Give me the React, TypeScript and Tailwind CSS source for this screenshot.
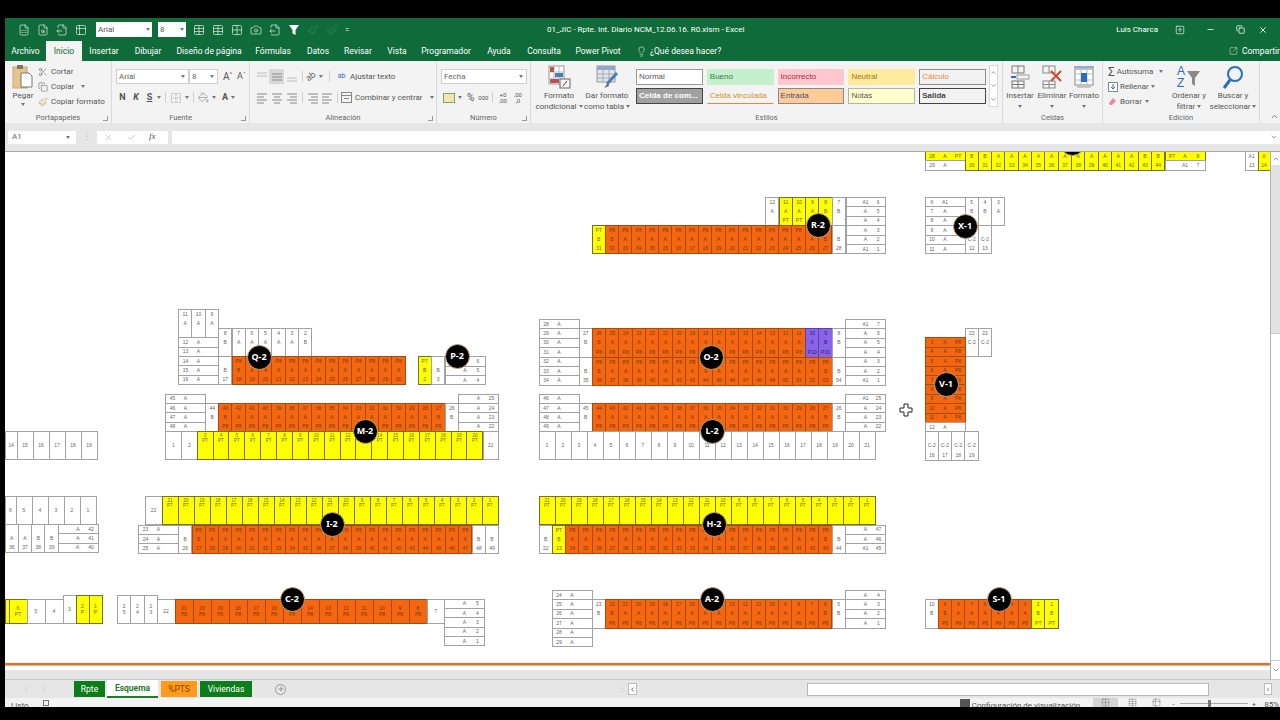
import {
  Camera, Check, ChevronDown, ChevronLeft, ChevronRight, ChevronUp, Copy, FileOutput, FileSearch, FileSpreadsheet,
  Grid2x2, Lightbulb, Minus, PaintBucket, Paintbrush, Plus, Scissors, SquareArrowOutUpRight, SquareArrowUp, Table, Table2, X,
} from 'lucide-react';
import type { ReactNode } from 'react';

const R = 9.4;
const W = 13.33;

type Kind = 'w' | 'o' | 'y' | 'p';
type Seat = { x: number; y: number; w: number; h: number; kind: Kind; lines: string[]; row?: boolean; pack?: 'top' | 'center' };

const kinds: Record<Kind, string> = {
  w: 'bg-white border-[#a2a2a2] text-[#666]',
  o: 'bg-[#f4660f] border-[#a64a10] text-[#7a3a10]',
  y: 'bg-[#ffff00] border-[#707028] text-[#66661a]',
  p: 'bg-[#8a63e8] border-[#5a3fb0] text-[#2a1a66]',
};

const nums = (a: number, b: number) => {
  const out: number[] = [];
  for (let n = a; a < b ? n <= b : n >= b; n += a < b ? 1 : -1) out.push(n);
  return out;
};

const box = (x: number, y: number, w: number, h: number, kind: Kind, lines: string[], pack?: 'top' | 'center'): Seat => ({ x, y, w, h, kind, lines, pack });

const rows = (x: number, y: number, w: number, list: string[][], kind: Kind = 'w'): Seat[] =>
  list.map((lines, i) => ({ x, y: y + i * R, w, h: R, kind, lines, row: true }));

const seats = (x: number, y: number, ns: number[], kind: Kind, line: (n: string, i: number, len: number) => string[], w = W, h = 3 * R): Seat[] =>
  ns.map((n, i) => box(x + i * w, y, w, h, kind, line(String(n), i, ns.length)));

// letter in the middle of a seat: B on the ends that have it, A elsewhere
const mid = (i: number, len: number, ends = 'BB') => ((i === 0 && ends[0] === 'B') || (i === len - 1 && ends[1] === 'B') ? 'B' : 'A');
const numTop = (p: string, ends = 'BB') => (n: string, i: number, len: number) => [n, mid(i, len, ends), p];
const numBot = (p: string, ends = 'BB') => (n: string, i: number, len: number) => [p, mid(i, len, ends), n];
const tall = (n: string) => [n, 'PT'];
const lefts = (ns: number[]) => ns.map(n => [String(n), 'A', '']);

const seatList: Seat[] = [
  // top strip
  ...rows(925, 151, 40, [['28', 'A', 'PT']], 'y'),
  ...rows(925, 160.4, 40, [['29', 'A', '']]),
  ...seats(965, 151, nums(30, 44), 'y', (n, i, len) => [i < 2 || i > len - 3 ? 'B' : 'A', n], W, 2 * R),
  ...rows(1165, 151, 40, [['P7', 'A', '8']], 'y'),
  ...rows(1165, 160.4, 40, [['', 'A1', '7']]),
  box(1245, 151, W, 2 * R, 'w', ['A1', '13']),
  box(1258, 151, 12, 2 * R, 'y', ['A', '14']),

  // R-2
  box(765.5, 197, W, 3 * R, 'w', ['12', 'A', '']),
  ...seats(779, 197, [11, 10, 9, 8], 'y', (n, i) => [n, i === 3 ? 'B' : 'A', i < 2 ? 'PT' : '']),
  box(832, 197, W, 3 * R, 'w', ['7', 'B', '']),
  box(832, 225.2, W, 3 * R, 'w', ['', 'B', '28']),
  ...rows(846, 197, 39, [['', 'A1', '6'], ['', 'A', '5'], ['', 'A', '4'], ['', 'A', '3'], ['', 'A', '2'], ['', 'A1', '1']]),
  box(592, 225.2, W, 3 * R, 'y', ['PT', 'B', '31']),
  ...seats(605.3, 225.2, [32, 33, 34, 35, ...nums(15, 27)], 'o', numBot('P8')),

  // X-1
  ...rows(925, 197, 40, [['6', 'A1', ''], ...lefts([7, 8, 9, 10, 11])]),
  ...seats(965, 197, [5, 4, 3], 'w', (n, i) => [n, i === 2 ? 'A' : 'B', '']),
  ...seats(965, 225.2, [12, 13], 'w', n => ['', 'C-2', n]),

  // Q-2
  ...seats(178.5, 309, [11, 10, 9], 'w', n => [n, 'A', '']),
  ...rows(178.5, 337.2, 40, lefts([12, 13, 14, 15, 16])),
  box(218.5, 328, W, 3 * R, 'w', ['8', 'B', '']),
  box(218.5, 356.2, W, 3 * R, 'w', ['', 'B', '17']),
  ...seats(232, 328, [7, 6, 5, 4, 3, 2], 'w', (n, i) => [n, i === 5 ? 'B' : 'A', '']),
  ...seats(232, 356.2, nums(18, 30), 'o', numBot('P8', 'B-')),

  // P-2
  box(418, 356.2, W, 3 * R, 'y', ['P7', 'B', '2']),
  box(431.5, 356.2, W, 3 * R, 'w', ['', 'B', '3']),
  ...rows(445, 356.2, 40, [['', '', '6'], ['', 'A', '5'], ['', 'A', '4']]),

  // M-2
  ...rows(165.5, 393.5, 40, lefts([45, 46, 47, 48])),
  box(205.5, 403, W, 3 * R, 'w', ['44', 'B', '']),
  ...seats(218.5, 403, nums(43, 27), 'o', numTop('P8')),
  box(445, 403, W, 3 * R, 'w', ['26', 'B', '']),
  ...rows(458.5, 393.5, 40, [['', 'A', '25'], ['', 'A', '24'], ['', 'A', '23'], ['', 'A', '22']]),
  ...seats(165.5, 431, [1, 2], 'w', n => [n], 15.87, 28),
  ...nums(3, 20).map((n, i) => box(197.2 + i * 15.87, 431, 15.87, 28, 'y', tall(String(n)), 'top')),
  box(483, 431, 15.5, 28, 'w', ['21']),

  // O-2
  ...rows(539, 319, 40, lefts([28, 29, 30, 31, 32, 33, 34])),
  box(579, 328.4, W, 3 * R, 'w', ['27', 'B', '']),
  box(579, 356.6, W, 3 * R, 'w', ['', 'B', '35']),
  ...seats(592.3, 328.4, nums(26, 11), 'o', (n, i) => [n, i === 0 ? 'B' : 'A', 'P8']),
  box(805.6, 328.4, W, 3 * R, 'p', ['10', 'A', 'P10']),
  box(818.9, 328.4, W, 3 * R, 'p', ['9', 'B', 'P10']),
  ...seats(592.3, 356.6, nums(36, 53), 'o', numBot('P8')),
  box(832.2, 328.4, W, 3 * R, 'w', ['8', 'B', '']),
  box(832.2, 356.6, W, 3 * R, 'w', ['', 'B', '54']),
  ...rows(845.5, 319, 40, [['', 'A1', '7'], ['', 'A', '6'], ['', 'A', '5'], ['', 'A', '4'], ['', 'A', '3'], ['', 'A', '2'], ['', 'A1', '1']]),

  // L-2
  ...rows(539, 393.5, 40, lefts([46, 47, 48, 49])),
  box(579, 403, W, 3 * R, 'w', ['45', 'B', '']),
  ...seats(592.3, 403, nums(44, 27), 'o', numTop('P8')),
  box(832.2, 403, W, 3 * R, 'w', ['26', 'B', '']),
  ...rows(845.5, 393.5, 40, [['', 'A1', '25'], ['', 'A', '24'], ['', 'A', '23'], ['', 'A', '22']]),
  ...seats(539, 431, nums(1, 21), 'w', n => [n], 16, 28),

  // V-1
  ...seats(965, 328, [23, 22], 'w', n => [n, 'C-2', '']),
  ...rows(925, 337.4, 40, nums(3, 11).map(n => [String(n), 'A', 'P8']), 'o'),
  ...rows(925, 422, 40, [['12', 'A', '']]),
  ...seats(925, 431.4, [16, 17, 18, 19], 'w', n => ['', 'C-2', n]),

  // row to the left of the M-2 row
  box(5, 431, 12, 28, 'w', ['14']),
  ...seats(17, 431, nums(15, 19), 'w', n => [n], 16, 28),

  // left block beside I-2
  box(5, 496, 11, 28, 'w', ['6']),
  ...seats(16, 496, nums(5, 1), 'w', n => [n], 16, 28),
  ...seats(5, 524, [36, 37, 38, 39], 'w', (n, i) => ['', i < 2 ? 'A' : 'B', n]),
  ...rows(58, 524, 40, [['', 'A', '42'], ['', 'A', '41'], ['', "A'", '40']]),

  // I-2
  box(145, 496, 17, 28, 'w', ['22']),
  ...nums(21, 1).map((n, i) => box(162 + i * 16, 496, 16, 28, 'y', tall(String(n)), 'top')),
  ...rows(138.5, 524.6, 40, lefts([23, 24, 25])),
  box(178.5, 524.6, W, 3 * R, 'w', ['', 'B', '26']),
  ...seats(192, 524.6, nums(27, 47), 'o', numBot('P8', 'B-')),
  ...seats(472, 524.6, [48, 49], 'w', n => ['', 'B', n]),

  // H-2
  ...nums(21, 1).map((n, i) => box(539 + i * 16, 496, 16, 28, 'y', tall(String(n)), 'top')),
  box(539, 524.6, W, 3 * R, 'w', ['', 'B', '22']),
  box(552.3, 524.6, W, 3 * R, 'y', ['PT', 'B', '23']),
  ...seats(565.6, 524.6, nums(24, 43), 'o', numBot('P8', '-B')),
  box(832.2, 524.6, W, 3 * R, 'w', ['', 'B', '44']),
  ...rows(845.5, 524.6, 40, [['', 'A', '47'], ['', 'A', '46'], ['', 'A1', '45']]),

  // A-2
  ...rows(552, 590, 40, lefts([24, 25, 26, 27, 28, 29])),
  box(592, 599.4, W, 3 * R, 'w', ['23', 'B', '']),
  ...seats(605.3, 599.4, nums(22, 6), 'o', numTop('P8')),
  box(832, 599.4, W, 3 * R, 'w', ['5', 'B', '']),
  ...rows(845.5, 590, 40, [['', 'A', '4'], ['', 'A', '3'], ['', 'A', '2'], ['', 'A', '1']]),

  // S-1
  box(925, 599.4, W, 3 * R, 'w', ['10', 'B', '']),
  ...seats(938.3, 599.4, nums(9, 3), 'o', numTop('P8', 'B-')),
  ...seats(1031.6, 599.4, [2, 1], 'y', n => [n, 'B', 'PT']),

  // C-2
  box(5, 599, 4, 24, 'y', []),
  box(9, 599, 18, 24, 'y', ['6', 'PT'], 'center'),
  ...seats(27, 599, [5, 4], 'w', n => [n], 18, 24),
  box(63, 595, 13, 28, 'w', ['3']),
  box(76, 595, 13, 28, 'y', ['2', 'P'], 'center'),
  box(89, 595, 13, 28, 'y', ['1', 'P'], 'center'),
  ...[5, 4, 3].map((n, i) => box(117.5 + i * W, 595, W, 28, 'w', ['2', String(n)], 'center')),
  box(157, 598.5, 18, 24.5, 'w', ['22']),
  ...nums(21, 8).map((n, i) => box(175 + i * 18, 598.5, 18, 24.5, 'o', [String(n), 'P8'], 'center')),
  box(427, 598.5, 17.5, 24.5, 'w', ['7']),
  ...rows(444.5, 598.5, 40, nums(5, 1).map(n => ['', 'A', String(n)])),
];

const badges = [
  { label: 'R-2', x: 818, y: 225 }, { label: 'X-1', x: 965, y: 226 }, { label: 'Q-2', x: 259, y: 357 },
  { label: 'P-2', x: 457, y: 356 }, { label: 'O-2', x: 711, y: 357 }, { label: 'M-2', x: 365, y: 431 },
  { label: 'L-2', x: 712, y: 431 }, { label: 'V-1', x: 946, y: 384 }, { label: 'I-2', x: 332, y: 524 },
  { label: 'H-2', x: 714, y: 524 }, { label: 'C-2', x: 292, y: 599 }, { label: 'A-2', x: 712, y: 599 },
  { label: 'S-1', x: 999, y: 599 }, { label: '', x: 1072, y: 143 },
];

function SeatBox({ seat }: { seat: Seat }) {
  const layout = seat.row ? 'grid grid-cols-3 items-center justify-items-center' : seat.pack === 'top' ? 'flex flex-col items-center pt-[1px]' : seat.pack === 'center' ? 'flex flex-col items-center justify-center' : 'flex flex-col items-center';
  const size = seat.pack === 'top' ? 'text-[4.5px]' : 'text-[5px]';
  return (
    <div
      className={`absolute box-border border ${size} leading-none font-['Liberation_Sans',sans-serif] ${layout} ${kinds[seat.kind]}`}
      style={{ left: seat.x - 5.5, top: seat.y - 152, width: seat.w + 1, height: seat.h + 1 }}
    >
      {seat.lines.map((line, i) => (
        <span key={i} className={seat.row ? '' : seat.pack ? 'h-[5.5px] flex items-center' : 'flex-1 flex items-center'}>{line}</span>
      ))}
    </div>
  );
}

function Sheet() {
  return (
    <div className="relative h-[518px] bg-white overflow-hidden">
      {seatList.map((seat, i) => <SeatBox key={i} seat={seat} />)}
      {badges.map(b => (
        <div
          key={b.label}
          className="absolute w-[25px] h-[25px] rounded-full bg-black border border-[#c9a37a] flex items-center justify-center text-white text-[9px] font-bold font-['Noto_Sans',sans-serif]"
          style={{ left: b.x - 5 - 12.5, top: b.y - 152 - 12.5 }}
        >
          {b.label}
        </div>
      ))}
      {/* excel cross cursor */}
      <svg className="absolute left-[894px] top-[251px]" width="14" height="14" viewBox="0 0 14 14">
        <path d="M5 1h4v4h4v4H9v4H5V9H1V5h4z" fill="#fff" stroke="#222" strokeWidth="1" />
      </svg>
      <div className="absolute left-0 right-0 top-[511px] h-[2px] bg-[#e8701c]" />
      <div className="absolute left-0 right-0 top-[513px] h-[1px] bg-[#d9b8a0]" />
    </div>
  );
}

function PasteIcon() {
  return (
    <svg width="22" height="26" viewBox="0 0 22 26">
      <rect x="1" y="3" width="14" height="21" fill="#e8c48c" stroke="#c9a56c" />
      <rect x="5" y="1" width="6" height="4" fill="#777" />
      <path d="M9 9h8l3 3v11H9z" fill="#fff" stroke="#777" />
    </svg>
  );
}

function CondFormatIcon() {
  return (
    <svg width="24" height="24" viewBox="0 0 24 24">
      <rect x="2" y="1" width="15" height="18" fill="#fff" stroke="#999" />
      <path d="M7 1v18M12 1v18M2 7h15M2 13h15" stroke="#bbb" />
      <rect x="3" y="2" width="4" height="5" fill="#c0504d" />
      <rect x="8" y="8" width="8" height="4" fill="#4a7ebb" />
      <rect x="3" y="14" width="9" height="4" fill="#c0504d" />
      <rect x="13" y="14" width="10" height="9" fill="#f4f4f4" stroke="#666" />
      <path d="M16 21l4-5" stroke="#444" />
    </svg>
  );
}

function TableFormatIcon() {
  return (
    <svg width="26" height="24" viewBox="0 0 26 24">
      <rect x="3" y="1" width="18" height="16" fill="#dfe6f0" stroke="#9a9a9a" />
      <rect x="3" y="1" width="18" height="4" fill="#8ea9c8" />
      <path d="M9 1v16M15 1v16M3 9h18M3 13h18" stroke="#a9a9a9" />
      <path d="M23 8L13 19" stroke="#4a7ebb" strokeWidth="3" />
      <path d="M14 18l-4 5 5-2z" fill="#666" />
    </svg>
  );
}

function InsertIcon() {
  return (
    <svg width="22" height="24" viewBox="0 0 22 24" fill="none" stroke="#777">
      <rect x="3" y="1" width="12" height="7" /><path d="M9 1v7" />
      <rect x="3" y="16" width="12" height="7" /><path d="M9 16v7M3 19.5h12" />
      <rect x="8" y="10" width="12" height="4" stroke="#999" />
      <path d="M2 12h5" stroke="#2a6ebb" strokeWidth="2" />
    </svg>
  );
}

function DeleteIcon() {
  return (
    <svg width="24" height="24" viewBox="0 0 24 24" fill="none" stroke="#888">
      <rect x="3" y="1" width="12" height="7" /><path d="M9 1v7" />
      <rect x="3" y="16" width="12" height="7" /><path d="M9 16v7M3 19.5h12" />
      <path d="M11 6l10 10M21 6L11 16" stroke="#d2492a" strokeWidth="2" />
    </svg>
  );
}

function FormatIcon() {
  return (
    <svg width="22" height="24" viewBox="0 0 22 24" fill="none" stroke="#888">
      <path d="M1 2h20" stroke="#2a6ebb" />
      <rect x="2" y="4" width="18" height="16" fill="#fff" />
      <path d="M8 4v16M14 4v16M2 9h18M2 15h18" stroke="#bbb" />
      <rect x="8" y="8" width="6" height="9" fill="#2a6ebb" stroke="none" />
      <path d="M4 22h14" stroke="#999" />
    </svg>
  );
}

function SortIcon() {
  return (
    <svg width="26" height="24" viewBox="0 0 26 24">
      <text x="1" y="10" fontSize="12" fill="#2a6ebb" fontFamily="'Liberation Sans'">A</text>
      <text x="1" y="22" fontSize="12" fill="#2a6ebb" fontFamily="'Liberation Sans'">Z</text>
      <path d="M11 6h13l-5 7v8l-3-2v-6z" fill="#8a8a8a" />
    </svg>
  );
}

function SearchIcon() {
  return (
    <svg width="24" height="24" viewBox="0 0 24 24" fill="none">
      <circle cx="14" cy="9" r="7" stroke="#2a6ebb" strokeWidth="2" />
      <path d="M9 15l-6 8" stroke="#2a6ebb" strokeWidth="3" />
    </svg>
  );
}

function AlignLines({ kind }: { kind: 'l' | 'c' | 'r' }) {
  const d = kind === 'l' ? 'M1 2h10M1 5h7M1 8h10M1 11h7' : kind === 'c' ? 'M1 2h10M3 5h6M1 8h10M3 11h6' : 'M1 2h10M4 5h7M1 8h10M4 11h7';
  return <svg width="12" height="12" viewBox="0 0 12 12"><path d={d} stroke="#888" fill="none" /></svg>;
}

function Caret({ className = '' }: { className?: string }) {
  return <span className={`inline-block w-0 h-0 border-l-[2px] border-r-[2px] border-t-[3px] border-l-transparent border-r-transparent border-t-[#777] align-middle ${className}`} />;
}

function Section({ w, label, launcher = true, children }: { w: string; label: string; launcher?: boolean; children: ReactNode }) {
  return (
    <div className={`${w} relative flex flex-col shrink-0 border-r border-[#dadada]`}>
      <div className="flex-1 min-h-0">{children}</div>
      <div className="h-[11px] leading-[11px] text-center text-[7.5px] text-[#666]">{label}</div>
      {launcher && <div className="absolute right-[3px] bottom-[2px] w-[5px] h-[5px] border-r border-b border-[#999]" />}
    </div>
  );
}

function Combo({ w, text }: { w: string; text: string }) {
  return (
    <div className={`${w} h-[15px] bg-white border border-[#cfcfcf] flex items-center justify-between pl-[2px] pr-[3px] text-[8px] text-[#666] shrink-0`}>
      <span>{text}</span>
      <Caret />
    </div>
  );
}

const ribbonTabs = [
  { t: 'Archivo', w: 'w-[41px]' }, { t: 'Inicio', w: 'w-[36px]', active: true }, { t: 'Insertar', w: 'w-[44px]' },
  { t: 'Dibujar', w: 'w-[44px]' }, { t: 'Diseño de página', w: 'w-[78px]' }, { t: 'Fórmulas', w: 'w-[50px]' },
  { t: 'Datos', w: 'w-[40px]' }, { t: 'Revisar', w: 'w-[40px]' }, { t: 'Vista', w: 'w-[38px]' },
  { t: 'Programador', w: 'w-[60px]' }, { t: 'Ayuda', w: 'w-[46px]' }, { t: 'Consulta', w: 'w-[44px]' },
  { t: 'Power Pivot', w: 'w-[64px]' },
];

const styleCells = [
  { t: 'Normal', c: 'bg-white border-[#9a9a9a] text-[#555]' },
  { t: 'Bueno', c: 'bg-[#c6efce] border-[#c6efce] text-[#2f7f3a]' },
  { t: 'Incorrecto', c: 'bg-[#ffc7ce] border-[#ffc7ce] text-[#a8283a]' },
  { t: 'Neutral', c: 'bg-[#ffeb9c] border-[#ffeb9c] text-[#a8701a]' },
  { t: 'Cálculo', c: 'bg-[#f2f2f2] border-[#8a8a8a] text-[#e8892a]' },
  { t: 'Celda de com...', c: 'bg-[#a0a0a0] border-[#444] text-white font-bold' },
  { t: 'Celda vinculada', c: 'bg-[#f3f3f3] border-transparent border-b-[#e8892a] text-[#d88a2a]' },
  { t: 'Entrada', c: 'bg-[#ffcc99] border-[#8a8a8a] text-[#4a4a70]' },
  { t: 'Notas', c: 'bg-[#ffffcc] border-[#b2b2b2] text-[#555]' },
  { t: 'Salida', c: 'bg-[#f2f2f2] border-[#444] text-[#444] font-bold' },
];

function TitleBar() {
  return (
    <div className="h-[23px] bg-[#0f6b3a] flex items-center text-white text-[8px] shrink-0">
      <div className="w-[542px] flex items-center shrink-0">
        <div className="flex items-center gap-[7px] pl-[13px] w-[91px]">
          <FileSpreadsheet size={12} strokeWidth={1.2} /><FileSearch size={12} strokeWidth={1.2} /><FileOutput size={12} strokeWidth={1.2} /><Table2 size={12} strokeWidth={1.2} />
        </div>
        <div className="w-[56px] h-[15px] bg-white text-[#555] flex items-center justify-between px-[2px] text-[8px]"><span>Arial</span><Caret /></div>
        <div className="ml-[6px] w-[28px] h-[15px] bg-white text-[#555] flex items-center justify-between px-[2px] text-[8px]"><span>8</span><Caret /></div>
        <div className="flex items-center gap-[7px] pl-[7px]">
          <Table size={12} strokeWidth={1.2} /><Table size={12} strokeWidth={1.2} /><Grid2x2 size={12} strokeWidth={1.2} /><Camera size={12} strokeWidth={1.2} /><FileOutput size={12} strokeWidth={1.2} />
          <svg width="12" height="12" viewBox="0 0 12 12"><path d="M1 1h10L7.5 6v5l-3-1.5V6z" fill="#fff" /></svg>
          <Paintbrush size={12} strokeWidth={1.2} className="text-[#2f8a58]" /><Paintbrush size={12} strokeWidth={1.2} className="text-[#2f8a58]" />
          <span className="leading-none text-[8px]">=</span>
        </div>
      </div>
      <span>01_JIC - Rpte. Int. Diario NCM_12.06.16. R0.xlsm  -  Excel</span>
      <div className="ml-auto flex items-center">
        <span className="mr-[7px]">Luis Charca</span>
        <div className="w-[30px] flex justify-center"><SquareArrowUp size={10} strokeWidth={1.5} /></div>
        <div className="w-[30px] flex justify-center"><Minus size={9} /></div>
        <div className="w-[31px] flex justify-center"><Copy size={9} /></div>
        <div className="w-[24px] flex justify-start pl-[2px]"><X size={10} /></div>
      </div>
    </div>
  );
}

function TabBar() {
  return (
    <div className="h-[20px] bg-[#0f6b3a] flex items-stretch text-white text-[8.5px] shrink-0">
      {ribbonTabs.map(tab => (
        <div key={tab.t} className={`${tab.w} flex items-center justify-center shrink-0 ${tab.active ? 'bg-[#f3f3f3] text-[#0f6b3a]' : ''}`}>{tab.t}</div>
      ))}
      <div className="flex items-center gap-[3px] pl-[6px]">
        <Lightbulb size={11} strokeWidth={1.2} />
        <span>¿Qué desea hacer?</span>
      </div>
      <div className="ml-auto flex items-center gap-[4px] w-[51px] shrink-0">
        <SquareArrowOutUpRight size={10} strokeWidth={1.2} />
        <span>Compartir</span>
      </div>
    </div>
  );
}

function Ribbon() {
  return (
    <div className="h-[62px] bg-[#f3f3f3] flex text-[8px] text-[#555] whitespace-nowrap shrink-0 font-['Roboto',sans-serif]">
      <Section w="w-[107px]" label="Portapapeles">
        <div className="flex pt-[3px]">
          <div className="w-[33px] flex flex-col items-center pl-[3px]">
            <PasteIcon />
            <span className="mt-[1px] leading-[10px]">Pegar</span>
            <Caret className="mt-[2px]" />
          </div>
          <div className="flex flex-col">
            <div className="h-[15px] flex items-center gap-[3px]"><Scissors size={10} strokeWidth={1.2} /><span>Cortar</span></div>
            <div className="h-[15px] flex items-center gap-[3px]"><Copy size={10} strokeWidth={1.2} /><span>Copiar</span><Caret className="ml-[4px]" /></div>
            <div className="h-[15px] flex items-center gap-[3px]"><Paintbrush size={10} strokeWidth={1.2} className="text-[#c08a30]" /><span>Copiar formato</span></div>
          </div>
        </div>
      </Section>

      <Section w="w-[138px]" label="Fuente">
        <div className="flex flex-col gap-[6px] pt-[8px] pl-[4px]">
          <div className="h-[15px] flex items-center">
            <Combo w="w-[73px]" text="Arial" />
            <Combo w="w-[29px]" text="8" />
            <span className="ml-[5px] text-[10px]">A</span><span className="text-[6px] -mt-[6px]">^</span>
            <span className="ml-[5px] text-[9px]">A</span><span className="text-[6px] -mt-[6px]">ˇ</span>
          </div>
          <div className="h-[15px] flex items-center text-[9px] font-bold text-[#555]">
            <span className="w-[13px] text-center">N</span>
            <span className="w-[14px] text-center italic">K</span>
            <span className="w-[13px] text-center underline">S</span>
            <Caret className="ml-[1px]" />
            <span className="mx-[4px] w-px h-[11px] bg-[#d0d0d0]" />
            <svg width="12" height="12" viewBox="0 0 12 12" fill="none" stroke="#aaa"><rect x="1.5" y="1.5" width="9" height="9" strokeDasharray="1 1" /><path d="M6 1v10M1 6h10" strokeDasharray="1 1" /></svg>
            <Caret className="ml-[3px]" />
            <span className="mx-[4px] w-px h-[11px] bg-[#d0d0d0]" />
            <PaintBucket size={11} strokeWidth={1.2} className="text-[#777]" />
            <Caret className="ml-[3px]" />
            <span className="ml-[6px]">A</span>
            <Caret className="ml-[3px]" />
          </div>
        </div>
      </Section>

      <Section w="w-[187px]" label="Alineación">
        <div className="flex flex-col gap-[6px] pt-[8px] pl-[4px]">
          <div className="h-[15px] flex items-center">
            <span className="w-[15px] flex justify-center"><svg width="12" height="10" viewBox="0 0 12 10"><path d="M1 1h10M1 4h10" stroke="#bbb" /></svg></span>
            <span className="w-[15px] h-[15px] bg-[#d8d8d8] flex items-center justify-center"><svg width="12" height="10" viewBox="0 0 12 10"><path d="M1 2h10M1 5h10M1 8h10" stroke="#888" /></svg></span>
            <span className="w-[15px] flex justify-center"><svg width="12" height="10" viewBox="0 0 12 10"><path d="M1 6h10M1 9h10" stroke="#bbb" /></svg></span>
            <span className="mx-[3px] w-px h-[11px] bg-[#d0d0d0]" />
            <span className="text-[9px] rotate-[-35deg] w-[10px] text-center text-[#666]">ab</span>
            <Caret className="ml-[3px]" />
            <span className="mx-[6px] w-px h-[11px] bg-[#d0d0d0]" />
            <span className="text-[7px] leading-[7px] w-[11px] text-center text-[#2a6ebb]">ab</span>
            <span className="ml-[3px]">Ajustar texto</span>
          </div>
          <div className="h-[15px] flex items-center">
            <span className="w-[15px] flex justify-center"><AlignLines kind="l" /></span>
            <span className="w-[15px] flex justify-center"><AlignLines kind="c" /></span>
            <span className="w-[15px] flex justify-center"><AlignLines kind="r" /></span>
            <span className="mx-[3px] w-px h-[11px] bg-[#d0d0d0]" />
            <span className="w-[14px] flex justify-center"><AlignLines kind="r" /></span>
            <span className="w-[14px] flex justify-center"><AlignLines kind="l" /></span>
            <span className="mx-[3px] w-px h-[11px] bg-[#d0d0d0]" />
            <svg width="11" height="11" viewBox="0 0 11 11" fill="none" stroke="#888"><rect x="0.5" y="0.5" width="10" height="10" /><path d="M0 3.5h11M3 6.5h5" /></svg>
            <span className="ml-[3px]">Combinar y centrar</span>
            <Caret className="ml-[7px]" />
          </div>
        </div>
      </Section>

      <Section w="w-[94px]" label="Número">
        <div className="flex flex-col gap-[6px] pt-[8px] pl-[4px]">
          <Combo w="w-[86px]" text="Fecha" />
          <div className="h-[15px] flex items-center text-[#555]">
            <span className="w-[12px] h-[10px] ml-[2px] border border-[#7aa56a] bg-[#f2e7b0]" />
            <Caret className="ml-[3px]" />
            <span className="ml-[5px] text-[10px]">%</span>
            <span className="ml-[4px] text-[6px]">000</span>
            <span className="mx-[4px] w-px h-[11px] bg-[#d0d0d0]" />
            <span className="text-[6px] leading-[6px] w-[11px] text-center">+0<br />,00</span>
            <span className="ml-[4px] text-[6px] leading-[6px] w-[11px] text-center">,00<br />,0</span>
          </div>
        </div>
      </Section>

      <Section w="w-[472px]" label="Estilos" launcher={false}>
        <div className="flex pt-[4px]">
          <div className="w-[48px] ml-[4px] flex flex-col items-center leading-[11px] text-center">
            <CondFormatIcon />
            <span className="mt-[1px]">Formato</span>
            <span>condicional <Caret /></span>
          </div>
          <div className="w-[48px] flex flex-col items-center leading-[11px] text-center">
            <TableFormatIcon />
            <span className="mt-[1px]">Dar formato</span>
            <span>como tabla <Caret /></span>
          </div>
          <div className="ml-[5px] mt-[4px] w-[350px] grid grid-cols-5 gap-x-[4px] gap-y-[3px] h-[35px]">
            {styleCells.map(s => (
              <div key={s.t} className={`h-[16px] border flex items-center pl-[2px] text-[8px] font-['Liberation_Sans',sans-serif] ${s.c}`}>{s.t}</div>
            ))}
          </div>
          <div className="ml-[3px] w-[9px] h-[42px] border border-[#d8d8d8] bg-white flex flex-col items-center justify-around">
            <ChevronUp size={7} /><ChevronDown size={7} /><ChevronDown size={7} />
          </div>
        </div>
      </Section>

      <Section w="w-[100px]" label="Celdas" launcher={false}>
        <div className="flex pt-[4px] pl-[1px]">
          {[{ t: 'Insertar', i: <InsertIcon /> }, { t: 'Eliminar', i: <DeleteIcon /> }, { t: 'Formato', i: <FormatIcon /> }].map(c => (
            <div key={c.t} className="w-[32px] flex flex-col items-center leading-[11px]">
              {c.i}
              <span className="mt-[1px]">{c.t}</span>
              <Caret className="mt-[4px]" />
            </div>
          ))}
        </div>
      </Section>

      <Section w="w-[157px]" label="Edición" launcher={false}>
        <div className="flex pt-[3px] pl-[5px]">
          <div className="w-[59px] flex flex-col">
            <div className="h-[15px] flex items-center gap-[2px]"><span className="text-[12px] leading-none text-[#555]">Σ</span><span>Autosuma</span><Caret className="ml-[4px]" /></div>
            <div className="h-[15px] flex items-center gap-[2px]"><svg width="10" height="10" viewBox="0 0 10 10"><rect x="0.5" y="0.5" width="9" height="9" fill="#fff" stroke="#888" /><path d="M5 2v5M3 5l2 2 2-2" stroke="#2a6ebb" fill="none" /></svg><span>Rellenar</span><Caret /></div>
            <div className="h-[15px] flex items-center gap-[3px]"><svg width="9" height="9" viewBox="0 0 9 9"><path d="M5 1l3 3-4 4H2L1 6z" fill="#e88aa0" /></svg><span>Borrar</span><Caret /></div>
          </div>
          <div className="w-[44px] flex flex-col items-center leading-[11px] text-center pt-[1px]">
            <SortIcon />
            <span className="mt-[1px]">Ordenar y</span>
            <span>filtrar <Caret /></span>
          </div>
          <div className="w-[44px] flex flex-col items-center leading-[11px] text-center pt-[1px]">
            <SearchIcon />
            <span className="mt-[1px]">Buscar y</span>
            <span>seleccionar <Caret /></span>
          </div>
        </div>
      </Section>
      <div className="flex-1 flex items-end justify-end pr-[1px] pb-[2px]"><ChevronUp size={9} /></div>
    </div>
  );
}

function FormulaBar() {
  return (
    <div className="h-[29px] bg-[#e6e6e6] border-b border-[#a8a8a8] flex items-center pl-[3px] text-[8px] text-[#666] shrink-0 font-['Roboto',sans-serif]">
      <div className="w-[68px] h-[13px] bg-white flex items-center justify-between pl-[4px] pr-[6px]"><span>A1</span><Caret /></div>
      <div className="w-[21px] text-center text-[#bbb] text-[8px] leading-none">⋮</div>
      <div className="w-[71px] h-[13px] bg-white flex items-center text-[#bbb]">
        <X size={9} className="ml-[7px]" />
        <Check size={9} className="ml-[14px]" />
        <span className="ml-[13px] italic font-['Liberation_Serif',serif] text-[9px] text-[#555]">fx</span>
      </div>
      <div className="ml-[4px] flex-1 h-[13px] bg-white flex items-center justify-end pr-[2px]"><ChevronDown size={8} /></div>
    </div>
  );
}

function SheetTabs() {
  return (
    <div className="h-[19px] bg-[#e6e6e6] border-t border-[#c8c8c8] flex items-center text-[8.5px] shrink-0 font-['Roboto',sans-serif]">
      <div className="w-[69px] flex items-center pl-[17px] gap-[10px] text-[#bbb]"><ChevronLeft size={8} /><ChevronRight size={8} /></div>
      <div className="w-[31px] h-[16px] bg-[#0c7d1a] text-white flex items-center justify-center">Rpte</div>
      <div className="ml-[2px] w-[51px] h-[18px] bg-white text-[#1f7a2a] font-bold flex items-center justify-center border-b-2 border-[#1f7a2a]">Esquema</div>
      <div className="ml-[3px] w-[36px] h-[16px] bg-[#ff9a1a] text-[#7a4a10] flex items-center justify-center">%PTS</div>
      <div className="ml-[3px] w-[52px] h-[16px] bg-[#0c7d1a] text-white flex items-center justify-center">Viviendas</div>
      <div className="ml-[23px] w-[11px] h-[11px] rounded-full border border-[#999] flex items-center justify-center text-[#777]"><Plus size={8} /></div>
      <div className="ml-[332px] w-[8px] text-center text-[#bbb] text-[8px] leading-none">⋮</div>
      <div className="ml-[2px] w-[9px] h-[12px] bg-white border border-[#bbb] flex items-center justify-center"><ChevronLeft size={7} /></div>
      <div className="w-[170px] h-[13px]" />
      <div className="w-[402px] h-[13px] bg-white border border-[#b8b8b8]" />
      <div className="w-[55px] h-[13px]" />
      <div className="w-[8px] h-[12px] bg-white border border-[#bbb] flex items-center justify-center"><ChevronRight size={7} /></div>
    </div>
  );
}

function StatusBar() {
  return (
    <div className="h-[9px] bg-[#f3f3f3] overflow-hidden flex items-start text-[8px] leading-[13px] text-[#555] shrink-0 font-['Roboto',sans-serif]">
      <span className="ml-[6px] mt-[1px]">Listo</span>
      <span className="ml-[15px] mt-[2px] w-[6px] h-[6px] border border-[#777]" />
      <span className="ml-auto mt-[1px] w-[10px] h-[10px] bg-[#555]" />
      <span className="ml-[2px] mt-[1px]">Configuración de visualización</span>
      <span className="ml-[13px] w-[25px] h-[9px] bg-[#d4d4d4] flex justify-center"><Grid2x2 size={9} strokeWidth={1} /></span>
      <span className="ml-[2px] w-[24px] flex justify-center"><Table size={9} strokeWidth={1} /></span>
      <span className="w-[24px] flex justify-center"><Table2 size={9} strokeWidth={1} /></span>
      <span className="ml-[4px] w-[8px]">-</span>
      <span className="relative w-[68px] h-[9px]">
        <span className="absolute left-0 right-0 top-[5px] h-px bg-[#aaa]" />
        <span className="absolute left-[28px] top-[2px] w-[3px] h-[7px] bg-[#777]" />
      </span>
      <span className="w-[12px] text-center">+</span>
      <span className="ml-[4px] mr-[1px] text-[8px]">85%</span>
    </div>
  );
}

export default function App() {
  return (
    <div className="w-[1280px] h-[720px] bg-black overflow-hidden pt-[18px] pl-[5px] font-['Roboto',sans-serif]">
      <div className="w-[1275px] h-[689px] flex flex-col bg-[#e6e6e6]">
        <TitleBar />
        <TabBar />
        <Ribbon />
        <FormulaBar />
        <div className="h-[527px] flex shrink-0">
          <div className="w-[1265px] shrink-0">
            <Sheet />
            <div className="h-[9px] bg-[#e6e6e6]" />
          </div>
          <div className="flex-1 bg-[#e2e2e2] border-l border-[#b0b0b0] flex flex-col relative">
            <div className="h-[13px] bg-white flex items-center justify-center shrink-0"><ChevronUp size={8} className="text-[#666]" /></div>
            <div className="h-[168px] shrink-0" />
            <div className="h-[328px] bg-white border-y border-[#c8c8c8] shrink-0" />
            <div className="flex-1 bg-white flex items-center justify-center"><ChevronDown size={8} className="text-[#666]" /></div>
          </div>
        </div>
        <SheetTabs />
        <StatusBar />
      </div>
    </div>
  );
}
